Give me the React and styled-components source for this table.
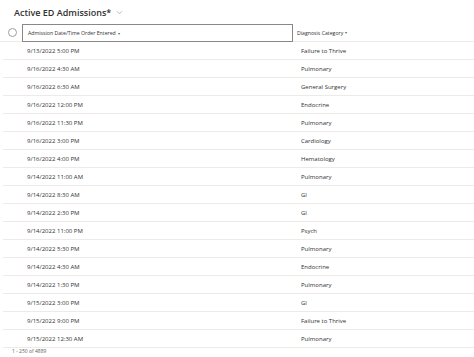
import React from "react";
import styled, { createGlobalStyle } from "styled-components";

const GlobalStyle = createGlobalStyle`
  html, body {
    margin: 0;
    padding: 0;
    background: #fff;
    font-family: "Open Sans", "Noto Sans", sans-serif;
    color: #323130;
  }
`;

const Page = styled.div`
  width: 474px;
  height: 357px;
  overflow: hidden;
  background: #fff;
`;

const TitleBar = styled.div`
  display: flex;
  align-items: center;
  gap: 5px;
  height: 24px;
  padding-left: 14px;
`;

const Title = styled.h1`
  margin: 0;
  font-size: 9px;
  font-weight: 600;
  color: #323130;
`;

const Chevron = styled.svg`
  width: 7px;
  height: 5px;
  margin-top: 1px;
`;

const Grid = styled.div`
  display: grid;
  grid-template-columns: 22px 271px 1fr;
`;

const Row = styled.div`
  display: contents;
`;

const SelectCell = styled.div`
  display: flex;
  align-items: center;
  justify-content: center;
  height: 18px;
  box-sizing: border-box;
  border-bottom: 1px solid #edebe9;
  margin-left: ${(p) => (p.$header ? "0" : "3px")};
`;

const Circle = styled.span`
  width: 9px;
  height: 9px;
  border-radius: 50%;
  border: 1px solid #a19f9d;
  box-sizing: border-box;
  margin-left: 2px;
`;

const HeaderCell = styled.div`
  display: flex;
  align-items: center;
  gap: 2px;
  height: 18px;
  box-sizing: border-box;
  padding-left: ${(p) => (p.$boxed ? "5px" : "4px")};
  font-size: 5.2px;
  color: #323130;
  border: ${(p) => (p.$boxed ? "1px solid #8a8886" : "none")};
  border-bottom: 1px solid ${(p) => (p.$boxed ? "#8a8886" : "#edebe9")};
`;

const Caret = styled.span`
  font-size: 4px;
  color: #605e5c;
`;

const Cell = styled.div`
  display: flex;
  align-items: center;
  height: 18px;
  box-sizing: border-box;
  border-bottom: 1px solid #edebe9;
  font-size: 6px;
  color: #323130;
  padding-left: ${(p) => p.$pad || "5px"};
`;

const Footer = styled.div`
  padding: 0 0 0 12px;
  font-size: 5px;
  line-height: 7px;
  color: #605e5c;
`;

const rows = [
  ["9/13/2022 5:00 PM", "Failure to Thrive"],
  ["9/16/2022 4:30 AM", "Pulmonary"],
  ["9/16/2022 6:30 AM", "General Surgery"],
  ["9/16/2022 12:00 PM", "Endocrine"],
  ["9/16/2022 11:30 PM", "Pulmonary"],
  ["9/16/2022 3:00 PM", "Cardiology"],
  ["9/16/2022 4:00 PM", "Hematology"],
  ["9/14/2022 11:00 AM", "Pulmonary"],
  ["9/14/2022 8:30 AM", "GI"],
  ["9/14/2022 2:30 PM", "GI"],
  ["9/14/2022 11:00 PM", "Psych"],
  ["9/14/2022 5:30 PM", "Pulmonary"],
  ["9/14/2022 4:30 AM", "Endocrine"],
  ["9/14/2022 1:30 PM", "Pulmonary"],
  ["9/15/2022 3:00 PM", "GI"],
  ["9/15/2022 9:00 PM", "Failure to Thrive"],
  ["9/15/2022 12:30 AM", "Pulmonary"],
];

export default function App() {
  return (
    <Page>
      <GlobalStyle />
      <TitleBar>
        <Title>Active ED Admissions*</Title>
        <Chevron viewBox="0 0 8 5">
          <path d="M1 1 L4 4 L7 1" fill="none" stroke="#a19f9d" strokeWidth="0.8" />
        </Chevron>
      </TitleBar>
      <Grid>
        <Row>
          <SelectCell $header>
            <Circle />
          </SelectCell>
          <HeaderCell $boxed>
            Admission Date/Time Order Entered <Caret>▾</Caret>
          </HeaderCell>
          <HeaderCell>
            Diagnosis Category <Caret>▾</Caret>
          </HeaderCell>
        </Row>
        {rows.map(([date, cat], i) => (
          <Row key={i}>
            <SelectCell />
            <Cell>{date}</Cell>
            <Cell $pad="8px">{cat}</Cell>
          </Row>
        ))}
      </Grid>
      <Footer>1 - 250 of 4889</Footer>
    </Page>
  );
}
